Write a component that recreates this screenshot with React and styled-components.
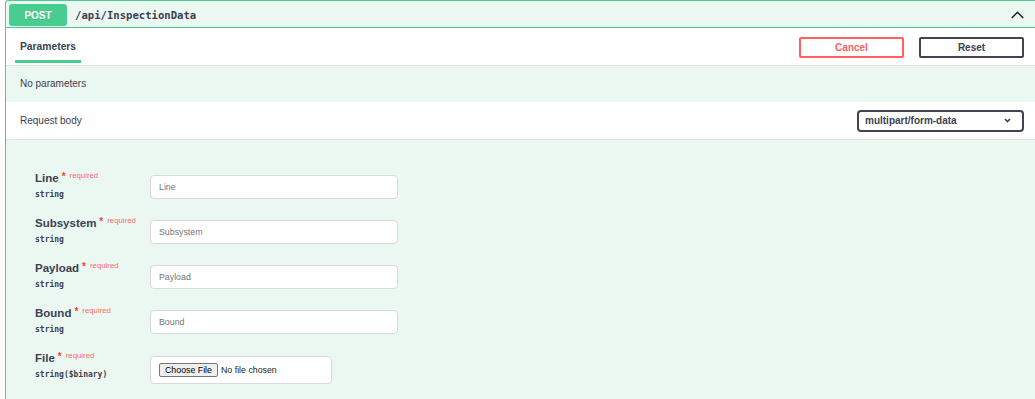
import styled, { createGlobalStyle } from "styled-components";

const GlobalStyle = createGlobalStyle`
  html, body {
    margin: 0;
    padding: 0;
    overflow: hidden;
    background: #ffffff;
  }
  body {
    font-family: "Liberation Sans", Arial, sans-serif;
    color: #3b4151;
  }
  * {
    box-sizing: border-box;
  }
`;

const tint = "#ebf7f1";
const green = "#49cc90";

const Opblock = styled.div`
  width: 1035px;
  height: 100vh;
  margin-left: 5px;
  border: 1px solid ${green};
  border-bottom: none;
  border-radius: 3px 3px 0 0;
  background: ${tint};
`;

const Summary = styled.div`
  display: flex;
  align-items: center;
  height: 27px;
  padding: 3px 15px 1px 3px;
  border-bottom: 1px solid ${green};
`;

const Method = styled.span`
  width: 58px;
  height: 22px;
  display: flex;
  align-items: center;
  justify-content: center;
  background: ${green};
  border-radius: 3px;
  color: #fff;
  font-weight: 700;
  font-size: 10px;
  text-shadow: 0 1px 0 rgba(0, 0, 0, 0.1);
`;

const Path = styled.span`
  flex: 1;
  padding-left: 8px;
  font-family: "DejaVu Sans Mono", monospace;
  font-weight: 700;
  font-size: 10.6px;
  color: #3b4151;
`;

const SectionHeader = styled.div`
  display: flex;
  align-items: ${(p) => (p.$tabs ? "flex-end" : "center")};
  justify-content: space-between;
  height: ${(p) => (p.$tabs ? "38px" : "37px")};
  padding: 0 15px 0 ${(p) => (p.$tabs ? "9px" : "14px")};
  background: ${(p) => (p.$white ? "#fdfefd" : tint)};
  border-bottom: ${(p) => (p.$line ? "1px solid #d9e2dd" : "none")};
  font-size: 10px;
`;

const Tab = styled.div`
  align-self: flex-end;
  padding: 13px 5px 7px;
  margin-bottom: 2px;
  line-height: 12px;
  font-size: 10.3px;
  font-weight: 700;
  color: #3b4151;
  border-bottom: 3px solid ${green};
`;

const Actions = styled.div`
  display: flex;
  gap: 15px;
  align-self: center;
  margin-top: 2px;
`;

const Button = styled.button`
  width: 105px;
  height: 21px;
  padding: 0;
  background: transparent;
  border: 2px solid ${(p) => (p.$danger ? "#ff6060" : "#41444e")};
  border-radius: 2px;
  color: ${(p) => (p.$danger ? "#ff6060" : "#3b4151")};
  font-family: "Liberation Sans", Arial, sans-serif;
  font-weight: 700;
  font-size: 10px;
`;

const Message = styled.div`
  display: flex;
  align-items: center;
  height: 36px;
  padding-left: 14px;
  font-size: 10px;
  line-height: 12px;
`;

const Select = styled.div`
  width: 167px;
  height: 22px;
  display: flex;
  align-items: center;
  justify-content: space-between;
  padding: 0 11px 0 6px;
  border: 2px solid #41444e;
  border-radius: 4px;
  background: #fff;
  font-weight: 700;
  font-size: 10px;
  color: #3b4151;
`;

const Form = styled.div`
  display: flex;
  flex-direction: column;
  padding: 30px 0 0 29px;
  border-top: 1px solid #dfe6e2;
`;

const Row = styled.div`
  display: grid;
  grid-template-columns: 115px auto;
  height: 45px;
  align-items: start;
`;

const Label = styled.div`
  display: flex;
  flex-direction: column;
  margin-top: 1px;
`;

const Name = styled.div`
  display: flex;
  align-items: flex-start;
  height: 14px;
  line-height: 14px;
  font-size: 11.5px;
  font-weight: 700;
  color: #3b4151;
`;

const Star = styled.span`
  color: #f93e3e;
  font-size: 10px;
  line-height: 12px;
  margin-left: 3px;
`;

const Required = styled.span`
  color: #ff6a6a;
  font-size: 7.8px;
  line-height: 10px;
  margin-left: 4px;
  font-weight: 400;
`;

const Type = styled.div`
  margin-top: 3px;
  line-height: 14px;
  font-family: "DejaVu Sans Mono", monospace;
  font-weight: 700;
  font-size: 8px;
  color: #3b4151;
`;

const TextInput = styled.input`
  width: 248px;
  height: 24px;
  margin-top: 5px;
  padding: 0 8px;
  border: 1px solid #d9d9d9;
  border-radius: 4px;
  background: #fff;
  font-family: "Liberation Sans", Arial, sans-serif;
  font-size: 8.8px;
  color: #3b4151;
  outline: none;
  &::placeholder {
    color: #757575;
  }
`;

const FileBox = styled.label`
  width: 182px;
  height: 28px;
  margin-top: 6px;
  display: flex;
  align-items: center;
  padding: 0 8px;
  border: 1px solid #d9d9d9;
  border-radius: 4px;
  background: #fff;
  font-size: 8.8px;
  color: #1a1a1a;
  input {
    display: none;
  }
`;

const FileButton = styled.span`
  display: flex;
  align-items: center;
  justify-content: center;
  width: 59px;
  height: 14px;
  margin-right: 3px;
  border: 1px solid #767676;
  border-radius: 2px;
  background: #efefef;
  color: #000;
`;

const ChevronUp = () => (
  <svg width="13" height="8" viewBox="0 0 13 8" fill="none">
    <polyline points="0.8,7 6.5,1.3 12.2,7" stroke="#1b1b1b" strokeWidth="1.5" />
  </svg>
);

const ChevronDown = () => (
  <svg width="7" height="5" viewBox="0 0 7 5" fill="none">
    <polyline points="1,1 3.5,3.6 6,1" stroke="#3b4151" strokeWidth="1.6" />
  </svg>
);

const fields = [
  { name: "Line", type: "string" },
  { name: "Subsystem", type: "string" },
  { name: "Payload", type: "string" },
  { name: "Bound", type: "string" },
  { name: "File", type: "string($binary)", file: true },
];

export default function App() {
  return (
    <>
      <GlobalStyle />
      <Opblock>
        <Summary>
          <Method>POST</Method>
          <Path>/api/InspectionData</Path>
          <ChevronUp />
        </Summary>
        <SectionHeader $tabs $white $line>
          <Tab>Parameters</Tab>
          <Actions>
            <Button $danger>Cancel</Button>
            <Button>Reset</Button>
          </Actions>
        </SectionHeader>
        <Message>No parameters</Message>
        <SectionHeader $white>
          <span>Request body</span>
          <Select>
            <span>multipart/form-data</span>
            <ChevronDown />
          </Select>
        </SectionHeader>
        <Form>
          {fields.map((f) => (
            <Row key={f.name}>
              <Label>
                <Name>
                  {f.name}
                  <Star>*</Star>
                  <Required>required</Required>
                </Name>
                <Type>{f.type}</Type>
              </Label>
              {f.file ? (
                <FileBox>
                  <input type="file" />
                  <FileButton>Choose File</FileButton>
                  No file chosen
                </FileBox>
              ) : (
                <TextInput placeholder={f.name} />
              )}
            </Row>
          ))}
        </Form>
      </Opblock>
    </>
  );
}
